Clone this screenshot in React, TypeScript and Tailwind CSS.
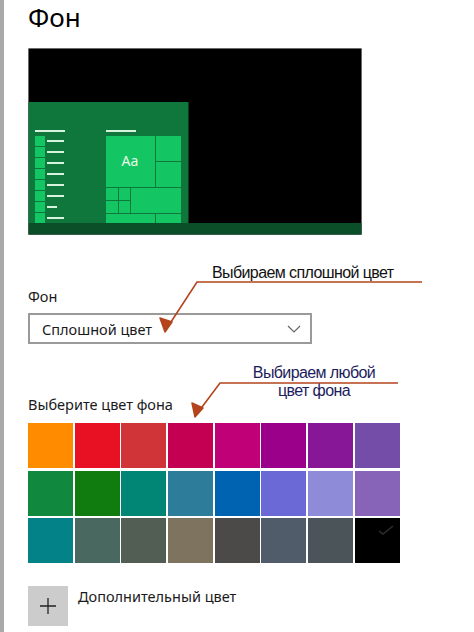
import React from 'react';

const swatches = [
  ['#ff8c00', '#e81123', '#d13438', '#c30052', '#bf0077', '#9a0089', '#881798', '#744da9'],
  ['#10893e', '#107c10', '#018574', '#2d7d9a', '#0063b1', '#6b69d6', '#8e8cd8', '#8764b8'],
  ['#038387', '#486860', '#525e54', '#7e735f', '#4c4a48', '#515c6b', '#4a5459', '#000000'],
];

const listRows = [0, 1, 2, 3, 4, 5, 6, 7];

// Desktop preview drawn as a picture
function Preview() {
  const tile = '#14c663';
  return (
    <svg width="334" height="187" viewBox="0 0 334 187" className="block">
      <rect x="0" y="0" width="334" height="187" fill="#000" stroke="#d4d4d4" strokeWidth="1" />
      <rect x="0.5" y="54" width="160" height="121" fill="#0f773b" />
      <rect x="0.5" y="175" width="333" height="11.5" fill="#0a4f28" />
      {/* app list */}
      <rect x="7" y="82" width="30" height="2" fill="#d9f2dd" />
      {listRows.map((i) => (
        <g key={i}>
          <rect x="7" y={88 + i * 11} width="10" height="10" fill={tile} />
          <rect x="19" y={92 + i * 11} width={i === 6 ? 10 : 17} height="2" fill="#d9f2dd" />
        </g>
      ))}
      {/* tiles */}
      <rect x="78" y="82" width="30" height="2" fill="#d9f2dd" />
      <rect x="78" y="88" width="49" height="51" fill={tile} />
      <rect x="128" y="88" width="25" height="25" fill={tile} />
      <rect x="128" y="114" width="25" height="25" fill={tile} />
      <rect x="78" y="140" width="12" height="12" fill={tile} />
      <rect x="91" y="140" width="11" height="12" fill={tile} />
      <rect x="78" y="153" width="12" height="12" fill={tile} />
      <rect x="91" y="153" width="11" height="12" fill={tile} />
      <rect x="103" y="140" width="50" height="25" fill={tile} />
      <rect x="78" y="166" width="49" height="9" fill={tile} />
      <rect x="128" y="166" width="25" height="9" fill={tile} />
      <text x="102" y="118" textAnchor="middle" fill="#e6fbe9" fontSize="14" fontFamily="'Noto Sans', sans-serif">
        Aa
      </text>
    </svg>
  );
}

export default function App() {
  return (
    <div className="relative w-[474px] h-[632px] bg-white flex overflow-hidden" style={{ fontFamily: "'Noto Sans', 'Open Sans', sans-serif" }}>
      <div className="w-[4px] bg-[#a9a9a9] shrink-0" />

      <div className="pl-[24px] flex flex-col text-[#1a1a1a]">
        <h1 className="pt-[1px] text-[26px] leading-[32px] font-normal text-black">Фон</h1>

        <div className="mt-[15px]">
          <Preview />
        </div>

        <div className="mt-[51px] text-[14.5px] leading-[20px]">Фон</div>
        <div className="mt-[7px] w-[284px] h-[31px] border-2 border-[#9a9a9a] flex items-center justify-between pl-[12px] pr-[9px]">
          <span className="text-[14.5px] leading-[20px]">Сплошной цвет</span>
          <svg width="14" height="8" viewBox="0 0 14 8" fill="none">
            <path d="M1 1 L7 7 L13 1" stroke="#666" strokeWidth="1.2" />
          </svg>
        </div>

        <div className="mt-[50px] text-[14.5px] leading-[20px]">Выберите цвет фона</div>
        <div className="mt-[9px] grid grid-cols-[repeat(8,45px)] gap-x-[1.7px] gap-y-[2.5px]">
          {swatches.flat().map((c, i) => (
            <div key={i} className="w-[45px] h-[45px] relative" style={{ backgroundColor: c }}>
              {i === 23 && (
                <svg className="absolute left-[22px] top-[6px]" width="18" height="12" viewBox="0 0 18 12" fill="none">
                  <path d="M2 7 L6 10 L16 2" stroke="#2e2e2e" strokeWidth="1.5" />
                </svg>
              )}
            </div>
          ))}
        </div>

        <div className="mt-[23px] flex items-start gap-[10px]">
          <div className="w-[40px] h-[40px] bg-[#cccccc] flex items-center justify-center">
            <svg width="16" height="16" viewBox="0 0 16 16" fill="none">
              <path d="M8 0 V16 M0 8 H16" stroke="#222" strokeWidth="1.3" />
            </svg>
          </div>
          <span className="text-[14.5px] leading-[20px]">Дополнительный цвет</span>
        </div>
      </div>

      {/* Annotations */}
      <svg className="absolute left-0 top-0 pointer-events-none" width="474" height="632" viewBox="0 0 474 632" fill="none">
        <path d="M422 282 H197 L169 325" stroke="#b4441c" strokeWidth="1.6" />
        <polygon points="165,332 160,318 172,322" fill="#b4441c" stroke="#b4441c" strokeWidth="1.5" strokeLinejoin="round" />
        <path d="M398 383 H220 L199 411" stroke="#b4441c" strokeWidth="1.6" />
        <polygon points="195,417 192,403 203,408" fill="#b4441c" stroke="#b4441c" strokeWidth="1.5" strokeLinejoin="round" />
      </svg>
      <div
        className="absolute left-[212px] top-[264px] text-[16px] leading-[18px] tracking-[-0.6px] text-[#111] whitespace-nowrap"
        style={{ fontFamily: "'Liberation Sans', Arial, sans-serif" }}
      >
        Выбираем сплошной цвет
      </div>
      <div
        className="absolute left-[234px] top-[364px] w-[160px] text-center text-[16px] leading-[18px] tracking-[-0.6px] text-[#1c1c5c] whitespace-nowrap"
        style={{ fontFamily: "'Liberation Sans', Arial, sans-serif" }}
      >
        Выбираем любой
        <br />
        цвет фона
      </div>
    </div>
  );
}
